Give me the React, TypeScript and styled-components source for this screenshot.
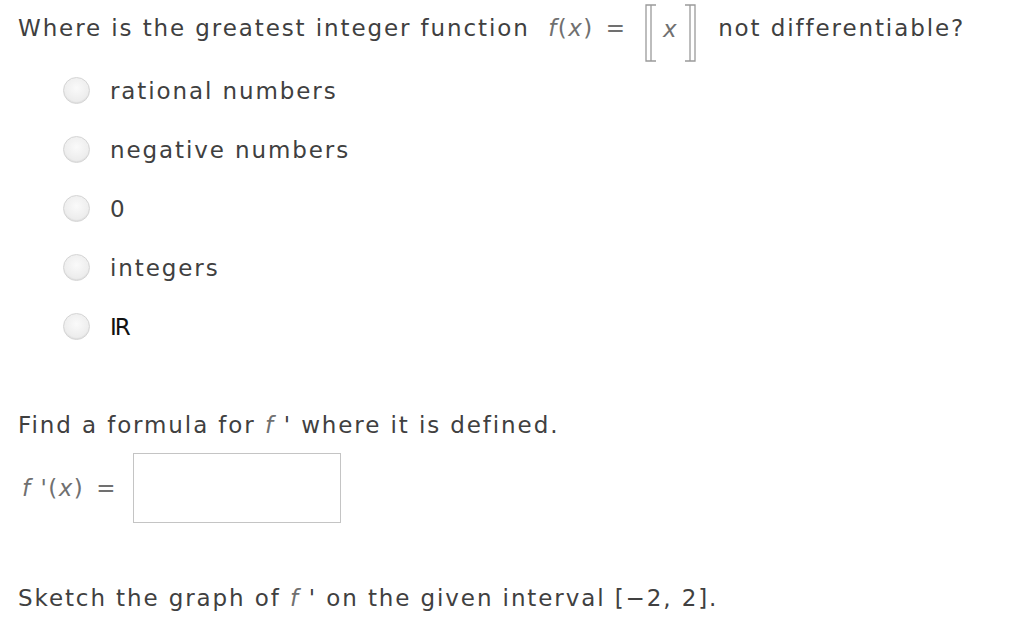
import React from "react";
import styled, { createGlobalStyle } from "styled-components";

const Global = createGlobalStyle`
    html, body {
        margin: 0;
        padding: 0;
        background: #ffffff;
    }
    body {
        font-family: "DejaVu Sans", Verdana, sans-serif;
        color: #404040;
    }
`

const Page = styled.div`
    width: 1024px;
    height: 620px;
    box-sizing: border-box;
    padding: 8px 0 0 18px;
    display: flex;
    flex-direction: column;
    font-size: 23px;
    letter-spacing: 1.9px;
    overflow: hidden;
`

const Question = styled.div`
    display: flex;
    align-items: center;
    height: 40px;
    white-space: pre;
`

const MathVar = styled.span<{ $upright?: boolean }>`
    font-style: ${p => (p.$upright ? "normal" : "italic")};
    color: #707070;
    letter-spacing: 1.5px;
`

const Eq = styled.span<{ $right?: number }>`
    color: #707070;
    margin: 0 ${p => p.$right ?? 16}px 0 12px;
`

const Floor = styled.span`
    display: inline-flex;
    align-items: center;
    height: 58px;
    margin-top: 10px;
    margin-right: 20px;
`

const FloorX = styled(MathVar)`
    padding: 0 4px;
    margin-top: -8px;
`

const Options = styled.div`
    display: flex;
    flex-direction: column;
    margin-top: 13px;
    padding-left: 45px;
`

const Option = styled.label`
    display: flex;
    align-items: center;
    height: 59px;
    gap: 20px;
`

const Radio = styled.span`
    width: 25px;
    height: 25px;
    border-radius: 50%;
    border: 1px solid #d4d4d4;
    background: radial-gradient(circle at 50% 40%, #fafafa 0%, #ececec 70%, #e2e2e2 100%);
    box-shadow: inset 0 -1px 1px rgba(0, 0, 0, 0.05);
`

const Reals = styled.span`
    color: #111;
    letter-spacing: -2px;
`

const Section = styled.div<{ $top: number }>`
    margin-top: ${p => p.$top}px;
    height: 36px;
    display: flex;
    align-items: center;
    white-space: pre;
`

const AnswerRow = styled.div`
    display: flex;
    align-items: center;
    margin-top: 10px;
    padding-left: 4px;
    white-space: pre;
`

const AnswerBox = styled.div`
    width: 206px;
    height: 68px;
    border: 1px solid #c4c4c4;
    background: #fff;
    margin-left: 15px;
`

const Bracket = ({ flip }: { flip?: boolean }) => (
    <svg width="16" height="58" viewBox="0 0 16 58" style={{ transform: flip ? "scaleX(-1)" : undefined }}>
        <path d="M13 1 H3 V57 H13" fill="none" stroke="#9a9a9a" strokeWidth="1.3" />
        <path d="M8 1 V57" fill="none" stroke="#9a9a9a" strokeWidth="1.3" />
    </svg>
)

const options: React.ReactNode[] = [
    "rational numbers",
    "negative numbers",
    "0",
    "integers",
    <Reals key="r">IR</Reals>,
]

export default function App() {
    return (
        <Page>
            <Global />
            <Question>
                {"Where is the greatest integer function  "}
                <MathVar>f</MathVar>
                <MathVar $upright>(</MathVar>
                <MathVar>x</MathVar>
                <MathVar $upright>)</MathVar>
                <Eq>=</Eq>
                <Floor>
                    <Bracket />
                    <FloorX>x</FloorX>
                    <Bracket flip />
                </Floor>
                {"not differentiable?"}
            </Question>
            <Options>
                {options.map((o, i) => (
                    <Option key={i}>
                        <Radio />
                        <span>{o}</span>
                    </Option>
                ))}
            </Options>
            <Section $top={51}>
                {"Find a formula for "}
                <MathVar>f</MathVar>
                {" ' where it is defined."}
            </Section>
            <AnswerRow>
                <MathVar>f</MathVar>
                <MathVar $upright> '(</MathVar>
                <MathVar>x</MathVar>
                <MathVar $upright>)</MathVar>
                <Eq $right={0}>=</Eq>
                <AnswerBox />
            </AnswerRow>
            <Section $top={57}>
                {"Sketch the graph of "}
                <MathVar>f</MathVar>
                {" ' on the given interval [−2, 2]."}
            </Section>
        </Page>
    )
}
